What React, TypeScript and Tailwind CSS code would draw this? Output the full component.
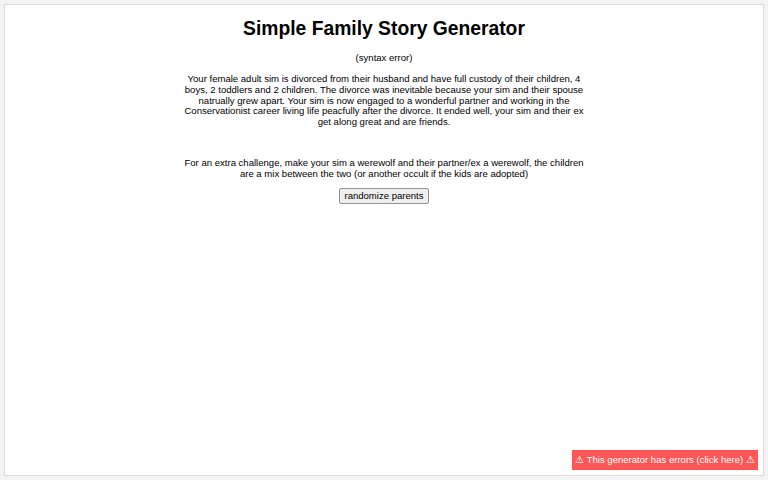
import React from "react";

export default function App() {
  return (
    <div className="w-[768px] h-[480px] bg-[#f3f3f3] p-[4px] font-['Liberation_Sans',Arial,sans-serif] text-black">
      <div className="relative h-[472px] bg-white border border-[#dcdcdc] flex flex-col items-center">
        <h1 className="mt-[13px] text-[19.3px] leading-[22px] font-bold">Simple Family Story Generator</h1>
        <div className="mt-[12px] text-[9.55px] leading-[11px]">(syntax error)</div>
        <div className="mt-[11px] w-[402px] text-center text-[9.55px] leading-[10.75px]">
          Your female adult sim is divorced from their husband and have full custody of their children, 4 boys, 2 toddlers and 2 children. The divorce was inevitable because your sim and their spouse natrually grew apart. Your sim is now engaged to a wonderful partner and working in the Conservationist career living life peacfully after the divorce. It ended well, your sim and their ex get along great and are friends.
        </div>
        <div className="mt-[30px] w-[402px] text-center text-[9.55px] leading-[10.75px]">
          For an extra challenge, make your sim a werewolf and their partner/ex a werewolf, the children are a mix between the two (or another occult if the kids are adopted)
        </div>
        <button className="mt-[9px] h-[16px] w-[90px] text-[9.55px] leading-[12px] bg-[#efefef] border border-[#8f8f8f] rounded-[2px] text-black">
          randomize parents
        </button>
        <div className="absolute right-[5px] bottom-[5px] h-[20px] w-[186px] justify-center bg-[#ff5757] text-white text-[9.55px] leading-[20px] flex items-center">
          ⚠ This generator has errors (click here) ⚠
        </div>
      </div>
    </div>
  );
}
